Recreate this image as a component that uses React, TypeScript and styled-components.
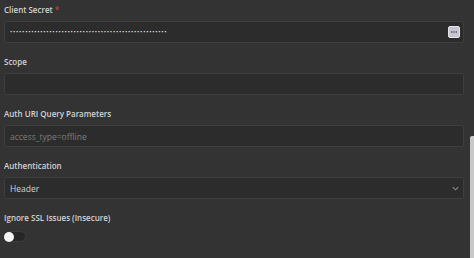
import React from "react";
import styled, { createGlobalStyle } from "styled-components";

const GlobalStyle = createGlobalStyle`
    html, body {
        margin: 0;
        padding: 0;
        background: #333333;
        overflow: hidden;
    }
    * {
        box-sizing: border-box;
    }
`;

const App: React.FC = () => {
    return (
        <Page>
            <GlobalStyle />
            <Form>
                <Field>
                    <Label>
                        Client Secret <Required>*</Required>
                    </Label>
                    <InputBox>
                        <Dots>{"•".repeat(52)}</Dots>
                        <RevealIcon viewBox="0 0 12 12">
                            <rect x="0.5" y="0.5" width="11" height="11" rx="1.5" fill="#c6c6cf" stroke="#e4e4ea" />
                            <rect x="3" y="5" width="1.4" height="2" fill="#74747d" />
                            <rect x="5.3" y="5" width="1.4" height="2" fill="#74747d" />
                            <rect x="7.6" y="5" width="1.4" height="2" fill="#74747d" />
                        </RevealIcon>
                    </InputBox>
                </Field>
                <Field>
                    <Label>Scope</Label>
                    <InputBox />
                </Field>
                <Field>
                    <Label>Auth URI Query Parameters</Label>
                    <InputBox>
                        <Placeholder>access_type=offline</Placeholder>
                    </InputBox>
                </Field>
                <Field>
                    <Label>Authentication</Label>
                    <InputBox>
                        <Value>Header</Value>
                        <Chevron viewBox="0 0 10 10">
                            <path d="M2 3.5 L5 6.5 L8 3.5" fill="none" stroke="#8a8a8a" strokeWidth="1.2" />
                        </Chevron>
                    </InputBox>
                </Field>
                <Field $last>
                    <Label>Ignore SSL Issues (Insecure)</Label>
                    <Toggle>
                        <Knob />
                    </Toggle>
                </Field>
            </Form>
            <ScrollTrack>
                <ScrollThumb />
            </ScrollTrack>
        </Page>
    );
};

export default App;

/* ~~~~~~ -- styling -- ~~~~~~ */

const Page = styled.div`
    display: flex;
    width: 474px;
    height: 258px;
    background: #333333;
    font-family: "Open Sans", "Liberation Sans", sans-serif;
`;

const Form = styled.div`
    flex: 1;
    display: flex;
    flex-direction: column;
    padding: 4px 3px 0 4px;
`;

const Field = styled.div<{ $last?: boolean }>`
    display: flex;
    flex-direction: column;
    gap: ${(p) => (p.$last ? "7px" : "5px")};
    margin-bottom: 13px;
`;

const Label = styled.div`
    font-size: 8px;
    line-height: 12px;
    font-weight: 600;
    color: #d2d2d2;
`;

const Required = styled.span`
    color: #b8473f;
`;

const InputBox = styled.div`
    display: flex;
    align-items: center;
    height: 22px;
    padding: 0 3px 0 5px;
    background: #2c2c2c;
    border: 1px solid #3e3e3e;
    border-radius: 2px;
`;

const Dots = styled.span`
    flex: 1;
    font-size: 6px;
    letter-spacing: 0.77px;
    color: #e6e6e6;
    overflow: hidden;
    white-space: nowrap;
`;

const RevealIcon = styled.svg`
    width: 12px;
    height: 12px;
    margin-left: auto;
`;

const Placeholder = styled.span`
    font-size: 8.5px;
    color: #7c7c7c;
`;

const Value = styled.span`
    flex: 1;
    font-size: 8.5px;
    color: #d4d4d4;
`;

const Chevron = styled.svg`
    width: 9px;
    height: 9px;
`;

const Toggle = styled.div`
    display: flex;
    align-items: center;
    width: 22px;
    height: 11px;
    border-radius: 6px;
    background: #262626;
    border: 1px solid #3c3c3c;
`;

const Knob = styled.div`
    width: 10px;
    height: 10px;
    margin-left: -1px;
    border-radius: 50%;
    background: #f4f4f4;
`;

const ScrollTrack = styled.div`
    width: 7px;
    display: flex;
    flex-direction: column;
    padding: 136px 0 0 3px;
`;

const ScrollThumb = styled.div`
    flex: 1;
    background: #c8c8c8;
    border-radius: 2px 0 0 0;
`;
